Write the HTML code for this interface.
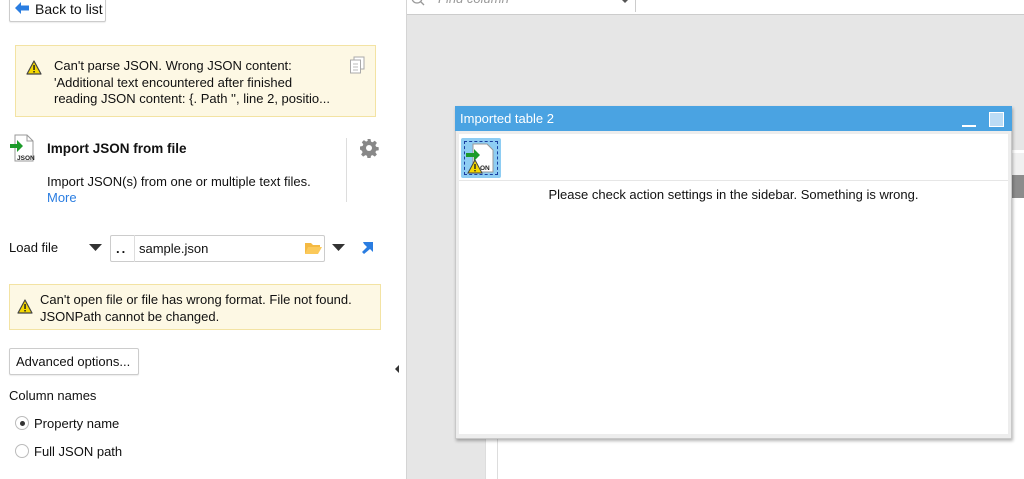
<!DOCTYPE html>
<html><head><meta charset="utf-8">
<style>
*{box-sizing:border-box;margin:0;padding:0}
body{width:1024px;height:479px;overflow:hidden;position:relative;background:#fff;font-family:"Liberation Sans",sans-serif;font-size:13px;color:#111}
.a{position:absolute}
.btn{border:1px solid #ccc;border-radius:2px;background:#fff;box-shadow:0 1px 1px rgba(0,0,0,.08)}
.warn{background:#fdf8e4;border:1px solid #f3e3a3}
</style></head><body>
<!-- left panel -->
<div class="a btn" style="left:9px;top:-6px;width:97px;height:28px"></div>
<svg class="a" style="left:14px;top:1px" width="16" height="14"><path d="M1 7 L7 1 V4.5 H15 V9.5 H7 V13 Z" fill="#2a7de1"/></svg>
<div class="a" style="left:35px;top:1px;font-size:14px">Back to list</div>

<div class="a warn" style="left:15px;top:45px;width:361px;height:72px"></div>
<svg class="a" style="left:26px;top:60px" width="16" height="15"><path d="M8 1 L15 14 H1 Z" fill="#f5d800" stroke="#444" stroke-width="1.2" stroke-linejoin="round"/><rect x="7.3" y="5" width="1.5" height="5" fill="#222"/><rect x="7.3" y="11" width="1.5" height="1.5" fill="#222"/></svg>
<div class="a" style="left:54px;top:58px;line-height:16.5px;font-size:13px">Can't parse JSON. Wrong JSON content:<br>'Additional text encountered after finished<br>reading JSON content: {. Path '', line 2, positio...</div>
<svg class="a" style="left:349px;top:56px" width="17" height="18"><rect x="5" y="1" width="10" height="12" fill="#fff" stroke="#aaa"/><rect x="1.5" y="4" width="10" height="13" fill="#fff" stroke="#aaa"/><path d="M4 8h5M4 11h5M4 14h5" stroke="#bbb"/></svg>

<svg class="a" style="left:9px;top:134px" width="30" height="30"><path d="M6 1 H18 L24 7 V27 H6 Z" fill="#fff" stroke="#999"/><path d="M18 1 V7 H24" fill="none" stroke="#999"/><path d="M1 10 H8 V6 L14 12 L8 18 V14 H1 Z" fill="#1c9b2a"/><text x="8" y="26" font-size="6.5" font-family="Liberation Sans" font-weight="bold" fill="#222">JSON</text></svg>
<div class="a" style="left:47px;top:141px;font-weight:bold;font-size:13.5px">Import JSON from file</div>
<div class="a" style="left:47px;top:174px;line-height:16px">Import JSON(s) from one or multiple text files.<br><span style="color:#2a7de1">More</span></div>
<div class="a" style="left:346px;top:138px;width:1px;height:64px;background:#ddd"></div>
<svg class="a" style="left:359px;top:138px" width="20" height="20" viewBox="0 0 20 20"><path fill="#888" d="M8.5 1h3l.5 2.6 1.6.7 2.2-1.5 2.1 2.1-1.5 2.2.7 1.6 2.6.5v3l-2.6.5-.7 1.6 1.5 2.2-2.1 2.1-2.2-1.5-1.6.7-.5 2.6h-3l-.5-2.6-1.6-.7-2.2 1.5-2.1-2.1 1.5-2.2-.7-1.6L1 11.5v-3l2.6-.5.7-1.6-1.5-2.2 2.1-2.1 2.2 1.5 1.6-.7z"/><circle cx="10" cy="10" r="3" fill="#fff"/></svg>

<div class="a" style="left:9px;top:240px">Load file</div>
<svg class="a" style="left:89px;top:244px" width="13" height="8"><path d="M0 0H13L6.5 7Z" fill="#333"/></svg>
<div class="a btn" style="left:110px;top:235px;width:215px;height:27px;box-shadow:none"></div>
<div class="a" style="left:134px;top:235px;width:1px;height:27px;background:#ddd"></div>
<div class="a" style="left:116px;top:241px;font-weight:bold;letter-spacing:2px">..</div>
<div class="a" style="left:139px;top:241px">sample.json</div>
<svg class="a" style="left:304px;top:241px" width="18" height="14"><path d="M1 2 H7 L9 4 H16 V6 H5 L1 13 Z" fill="#f4b942"/><path d="M4 6 H18 L14 13 H1 Z" fill="#fbc95a"/></svg>
<svg class="a" style="left:332px;top:244px" width="13" height="8"><path d="M0 0H13L6.5 7Z" fill="#333"/></svg>
<svg class="a" style="left:361px;top:241px" width="13" height="13"><path d="M2 1 H12 V11 L9 8 L3 13 L1 11 L6 6 L3 3 Z" fill="#2a7de1"/></svg>

<div class="a warn" style="left:9px;top:284px;width:372px;height:46px"></div>
<svg class="a" style="left:17px;top:299px" width="16" height="15"><path d="M8 1 L15 14 H1 Z" fill="#f5d800" stroke="#444" stroke-width="1.2" stroke-linejoin="round"/><rect x="7.3" y="5" width="1.5" height="5" fill="#222"/><rect x="7.3" y="11" width="1.5" height="1.5" fill="#222"/></svg>
<div class="a" style="left:40px;top:291px;line-height:17px">Can't open file or file has wrong format. File not found.<br>JSONPath cannot be changed.</div>

<div class="a btn" style="left:9px;top:348px;width:130px;height:27px"></div>
<div class="a" style="left:16px;top:354px">Advanced options...</div>
<div class="a" style="left:9px;top:388px">Column names</div>
<div class="a" style="left:15px;top:416px;width:14px;height:14px;border:1px solid #bbb;border-radius:50%"><div style="width:5px;height:5px;background:#333;border-radius:50%;margin:3.5px"></div></div>
<div class="a" style="left:34px;top:416px">Property name</div>
<div class="a" style="left:15px;top:444px;width:14px;height:14px;border:1px solid #bbb;border-radius:50%"></div>
<div class="a" style="left:34px;top:444px">Full JSON path</div>
<svg class="a" style="left:395px;top:365px" width="5" height="8"><path d="M4 0V8L0 4Z" fill="#333"/></svg>

<!-- right area -->
<div class="a" style="left:406px;top:0;width:618px;height:479px;background:#e6e6e6;border-left:1px solid #d4d4d4"></div>
<div class="a" style="left:407px;top:0;width:617px;height:15px;background:#fff;border-bottom:1px solid #ccc"></div>
<div class="a" style="left:635px;top:0;width:1px;height:12px;background:#ccc"></div>
<div class="a" style="left:438px;top:-9px;color:#999;font-style:italic">Find column</div>
<svg class="a" style="left:411px;top:-4px" width="14" height="10"><circle cx="6" cy="2" r="5" fill="none" stroke="#999" stroke-width="1.3"/><path d="M9.5 5.5L13 9" stroke="#999" stroke-width="1.3"/></svg>
<svg class="a" style="left:622px;top:0" width="6" height="4"><path d="M0 0H6L3 3Z" fill="#555"/></svg>
<div class="a" style="left:485px;top:150px;width:539px;height:329px;background:#fff;border-left:1px solid #ddd"></div>
<div class="a" style="left:497px;top:150px;width:1px;height:329px;background:#ddd"></div>
<div class="a" style="left:485px;top:153px;width:539px;height:22px;background:#f0f0f0"></div>
<div class="a" style="left:485px;top:175px;width:539px;height:23px;background:#8c8c8c"></div>

<!-- window -->
<div class="a" style="left:455px;top:106px;width:557px;height:333px;background:#ededed;border:1px solid #c8c8c8;box-shadow:1px 2px 3px rgba(0,0,0,.3)"></div>
<div class="a" style="left:455px;top:106px;width:557px;height:25px;background:#4aa3e2"></div>
<div class="a" style="left:460px;top:111px;color:#fff;font-size:13px">Imported table 2</div>
<div class="a" style="left:962px;top:125px;width:14px;height:2px;background:#fff"></div>
<div class="a" style="left:989px;top:112px;width:15px;height:15px;background:#bcdcf5;border:1px solid #fff"></div>
<div class="a" style="left:459px;top:134px;width:549px;height:300px;background:#fff"></div>
<div class="a" style="left:459px;top:180px;width:549px;height:1px;background:#e6e6e6"></div>
<div class="a" style="left:461px;top:138px;width:40px;height:40px;background:#8ecdf3;border-radius:2px"></div>
<div class="a" style="left:464px;top:141px;width:34px;height:34px;border:1.5px dashed #1a3fa0"></div>
<svg class="a" style="left:463px;top:140px" width="36" height="36"><path d="M10 4 H24 L30 10 V32 H10 Z" fill="#fff" stroke="#999"/><path d="M3 13 H11 V9 L17 15 L11 21 V17 H3 Z" fill="#1c9b2a"/><text x="17" y="30" font-size="6.5" font-weight="bold" fill="#222" font-family="Liberation Sans">ON</text><path d="M12 20 L19 33 H5 Z" fill="#f5d800" stroke="#444"/><rect x="11.3" y="24" width="1.4" height="5" fill="#222"/><rect x="11.3" y="30" width="1.4" height="1.4" fill="#222"/></svg>
<div class="a" style="left:459px;top:187px;width:549px;text-align:center">Please check action settings in the sidebar. Something is wrong.</div>
</body></html>
